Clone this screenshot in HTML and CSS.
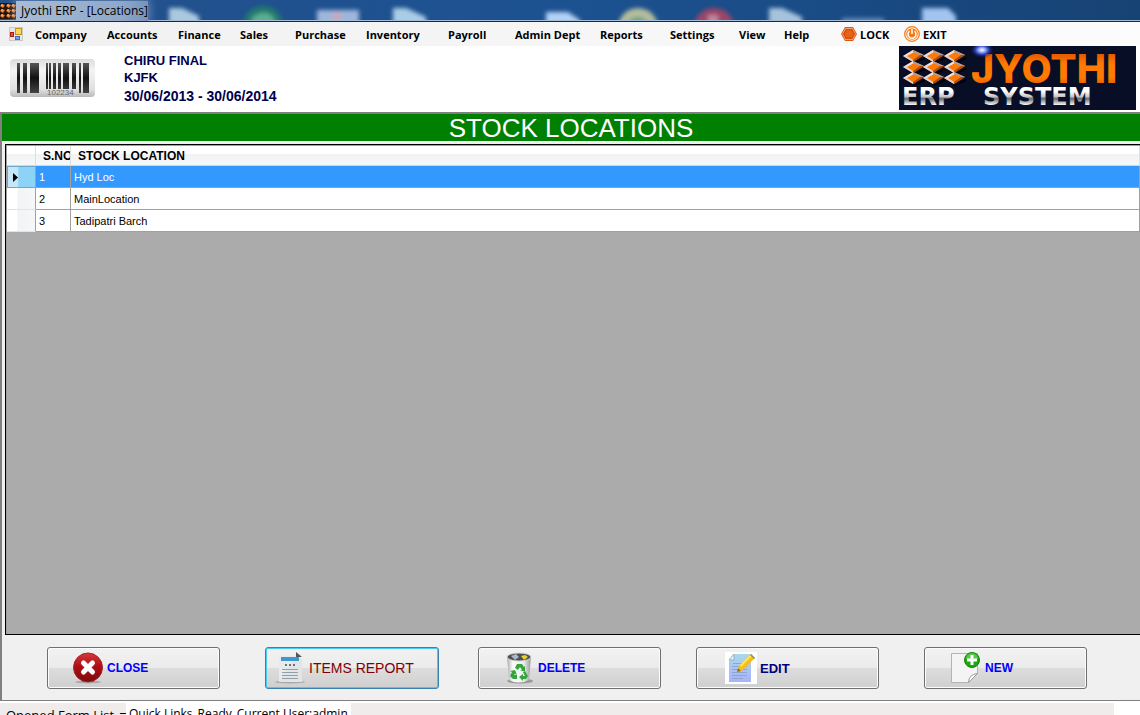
FILE: index.html
```html
<!DOCTYPE html>
<html lang="en">
<head>
  <meta charset="UTF-8" />
  <meta name="viewport" content="width=device-width, initial-scale=1.0"/>
  <title>Jyothi ERP - [Locations]</title>
  <link rel="stylesheet" href="styles.css">
</head>
<body>
  <div class="titlebar">
    <svg class="desktop" width="1140" height="20" viewBox="0 0 1140 20" aria-hidden="true">
      <defs>
        <filter id="soft" x="-20%" y="-50%" width="140%" height="200%"><feGaussianBlur stdDeviation="2"/></filter>
      </defs>
      <g filter="url(#soft)">
        <path d="M169 8h13l17 8v10h-30z" fill="#a9c9de"/>
        <circle cx="263" cy="26" r="20" fill="#217a6c"/>
        <path d="M252 18q12-10 22 0v6h-22z" fill="#5fae92"/>
        <path d="M317 10h42v16h-42z" fill="#9fb6dc"/>
        <path d="M333 12h8v12h-8z" fill="#c9a8bd"/>
        <path d="M393 8h13l20 9v9h-33z" fill="#a9cde4"/>
        <path d="M546 12h22l12 8v6h-34z" fill="#b3d0f6"/>
        <circle cx="638" cy="28" r="20" fill="#b3bd9c"/>
        <circle cx="638" cy="29" r="12" fill="#6f9f86"/>
        <circle cx="714" cy="28" r="20" fill="#9c4468"/>
        <path d="M708 15h10v10h-10z" fill="#c5869c"/>
        <path d="M769 8h13l20 9v9h-33z" fill="#a5c4dc"/>
        <path d="M842 18h42v6h-42z" fill="#5f8abb"/>
        <path d="M922 8h26l8 8v10h-34z" fill="#a3c4ee"/>
        <path d="M20 16h28v8H20z" fill="#b7cbb9"/>
        <path d="M85 18h42v6H85z" fill="#9b9cb8"/>
      </g>
    </svg>
    <svg class="app-icon" width="16" height="16" viewBox="0 0 16 16" aria-hidden="true">
      <rect width="16" height="16" fill="#23140e"/>
      <g fill="#f57e20">
        <path d="M0 3l2-2 3 1-2 3zM6 3l2-2 3 1-2 3zM11 3l2-2 3 1-2 3zM0 8l2-2 3 1-2 3zM6 8l2-2 3 1-2 3zM11 8l2-2 3 1-2 3zM0 13l2-2 3 1-2 3zM6 13l2-2 3 1-2 3zM11 13l2-2 3 1-2 3z"/>
      </g>
      <path d="M1 2h2M7 2h2M12 2h2M1 7h2M7 7h2M12 7h2M1 12h2M7 12h2M12 12h2" stroke="#ffd0a8"/>
    </svg>
    <span class="window-title">Jyothi ERP - [Locations]</span>
  </div>

  <nav class="menu">
    <svg width="14" height="14" viewBox="0 0 14 14" aria-hidden="true">
      <rect x="0.5" y="0.5" width="13" height="13" fill="#e6e6e6" stroke="#c9c9c9"/>
      <rect x="6.5" y="1.5" width="6" height="6" fill="#ffd45a" stroke="#c99312"/>
      <rect x="1.5" y="5.5" width="3" height="4" fill="#e2503a" stroke="#a91d14"/>
      <rect x="6.5" y="9.5" width="4" height="3" fill="#6fa5f0" stroke="#3b6fd0"/>
    </svg>
    <a href="#">Company</a>
    <a href="#">Accounts</a>
    <a href="#">Finance</a>
    <a href="#">Sales</a>
    <a href="#">Purchase</a>
    <a href="#">Inventory</a>
    <a href="#">Payroll</a>
    <a href="#">Admin Dept</a>
    <a href="#">Reports</a>
    <a href="#">Settings</a>
    <a href="#">View</a>
    <a href="#">Help</a>
    <a href="#">
      <svg width="16" height="16" viewBox="0 0 16 16" aria-hidden="true">
        <path d="M4 1h8l4 7-4 7H4L0 8z" fill="#e0560f"/>
        <path d="M4.500 2.500h7L14.500 8l-3 5.500h-7L1.500 8z" fill="none" stroke="#f6a46a"/>
        <path d="M5 4h6l2 4-2 4H5L3 8z" fill="#e8621a" stroke="#c94e0c"/>
      </svg>
      LOCK
    </a>
    <a href="#">
      <svg width="16" height="16" viewBox="0 0 16 16" aria-hidden="true">
        <circle cx="8" cy="8" r="7.300" fill="#fff" stroke="#f57a14" stroke-width="1.300"/>
        <circle cx="8" cy="8" r="5.800" fill="#f57a14"/>
        <path d="M5.500 5.200a4 4 0 1 0 5 0M8 3v5" fill="none" stroke="#fff" stroke-width="1.500"/>
      </svg>
      EXIT
    </a>
  </nav>

  <header>
    <svg class="barcode" width="88" height="42" viewBox="0 0 88 42" role="img" aria-label="Barcode">
      <defs>
        <linearGradient id="plate" x1="0" y1="0" x2="0" y2="1">
          <stop offset="0" stop-color="#dcdcdc"/>
          <stop offset="0.300" stop-color="#f4f4f4"/>
          <stop offset="0.800" stop-color="#e0e0e0"/>
          <stop offset="1" stop-color="#b9b9b9"/>
        </linearGradient>
        <linearGradient id="bars" x1="0" y1="0" x2="0" y2="1">
          <stop offset="0" stop-color="#555"/>
          <stop offset="0.500" stop-color="#111"/>
          <stop offset="1" stop-color="#444"/>
        </linearGradient>
      </defs>
      <rect x="1" y="2" width="85" height="38" rx="4" fill="url(#plate)"/>
      <path fill="url(#bars)" d="M8 6h3v30H8zM14 6h4v30h-4zM21 6h9v30h-9zM37 6h2v26h-2zM40 6h2v26h-2zM44 6h3v26h-3zM49 6h3v26h-3zM54 6h6v26h-6zM63 6h4v26h-4zM70 6h2v30h-2zM74 6h6v30h-6z"/>
      <text class="barcode-number" x="38" y="38">102234</text>
    </svg>
    <div class="company">
      <div>CHIRU FINAL</div>
      <div>KJFK</div>
      <div class="period">30/06/2013 - 30/06/2014</div>
    </div>
    <svg class="logo" width="237" height="64" viewBox="0 0 237 64" role="img" aria-label="Jyothi ERP System">
      <defs>
        <radialGradient id="flare">
          <stop offset="0" stop-color="#fff"/>
          <stop offset="0.300" stop-color="#8fa6ff"/>
          <stop offset="0.600" stop-color="#2b43c8" stop-opacity="0.800"/>
          <stop offset="1" stop-color="#0a0f2a" stop-opacity="0"/>
        </radialGradient>
        <linearGradient id="chrome" x1="0" y1="0" x2="0" y2="1">
          <stop offset="0.300" stop-color="#fff"/>
          <stop offset="0.480" stop-color="#c8c8c8"/>
          <stop offset="0.560" stop-color="#6b6b70"/>
          <stop offset="0.780" stop-color="#f4f4f4"/>
        </linearGradient>
        <linearGradient id="amber" x1="0" y1="0" x2="0" y2="1">
          <stop offset="0.200" stop-color="#e65a00"/>
          <stop offset="0.400" stop-color="#ff7a00"/>
          <stop offset="0.700" stop-color="#ff7a00"/>
          <stop offset="0.850" stop-color="#e65a00"/>
        </linearGradient>
        <g id="gem">
          <path d="M2 8l9 5 11-6v2l-11 5z" fill="#000"/>
          <path d="M0 6L10 0l11 5-11 7z" fill="#ff7a05"/>
          <path d="M0 6L10 0l1 2-7 4z" fill="#e6e2ea"/>
          <path d="M10 0l11 5h-4l-7-3z" fill="#a7a0a8"/>
          <path d="M0 6l10 6v-2L4 6z" fill="#d9d3dc"/>
          <path d="M10 12l11-7h-4l-7 5z" fill="#b34a00"/>
        </g>
      </defs>
      <rect width="237" height="64" fill="#090e27"/>
      <use href="#gem" x="4" y="4"/><use href="#gem" x="24" y="4"/><use href="#gem" x="45" y="4"/>
      <use href="#gem" x="4" y="15"/><use href="#gem" x="24" y="15"/><use href="#gem" x="45" y="15"/>
      <use href="#gem" x="4" y="26"/><use href="#gem" x="24" y="26"/><use href="#gem" x="45" y="26"/>
      <text class="logo-name" x="72" y="37">JYOTHI</text>
      <ellipse cx="83" cy="4" rx="12" ry="8" fill="url(#flare)"/>
      <text class="logo-sub" x="3" y="59">ERP</text>
      <text class="logo-sub" x="84" y="59">SYSTEM</text>
    </svg>
  </header>

  <main>
    <h1>STOCK LOCATIONS</h1>
    <div class="grid">
      <table>
        <thead>
          <tr>
            <th class="mark"></th>
            <th class="sno">S.NO</th>
            <th>STOCK LOCATION</th>
          </tr>
        </thead>
        <tbody>
          <tr class="selected">
            <td class="mark"><svg width="5" height="9" viewBox="0 0 5 9" aria-hidden="true"><path d="M0 0l5 4.500L0 9z"/></svg></td>
            <td>1</td>
            <td>Hyd Loc</td>
          </tr>
          <tr>
            <td class="mark"></td>
            <td>2</td>
            <td>MainLocation</td>
          </tr>
          <tr>
            <td class="mark"></td>
            <td>3</td>
            <td>Tadipatri Barch</td>
          </tr>
        </tbody>
      </table>
    </div>

    <div class="actions">
      <button type="button" class="close">
        <svg width="32" height="32" viewBox="0 0 32 32" aria-hidden="true">
          <defs>
            <linearGradient id="red" x1="0" y1="0" x2="0" y2="1">
              <stop offset="0" stop-color="#d8383c"/>
              <stop offset="0.450" stop-color="#ad1015"/>
              <stop offset="1" stop-color="#7d0a0d"/>
            </linearGradient>
          </defs>
          <ellipse cx="16" cy="30" rx="13" ry="1.500" fill="#aaa"/>
          <circle cx="16" cy="15.500" r="14.500" fill="url(#red)" stroke="#a3262a"/>
          <path d="M11.500 11l9 9M20.500 11l-9 9" stroke="#fff" stroke-width="5" stroke-linecap="round"/>
        </svg>
        CLOSE
      </button>
      <button type="button" class="items">
        <svg width="32" height="32" viewBox="0 0 32 32" aria-hidden="true">
          <ellipse cx="16" cy="30" rx="15" ry="1.500" fill="#aaa"/>
          <path d="M5 4h19v26H5z" fill="#e9eaeb"/>
          <path d="M22 4l6 3v23H5z" fill="#e3e4e5"/>
          <path d="M7 5h18v4H7z" fill="#3d98cc"/>
          <path d="M22 0l6 5h-6z" fill="#555"/>
          <path d="M11 12h2v2h-2zM15 12h2v2h-2zM19 12h2v2h-2z" fill="#68737c"/>
          <path d="M8 17.500h16M8 20.500h16M8 23.500h16M8 26.500h16" stroke="#8fa0aa"/>
        </svg>
        ITEMS REPORT
      </button>
      <button type="button" class="delete">
        <svg width="32" height="32" viewBox="0 0 32 32" aria-hidden="true">
          <defs>
            <linearGradient id="bin" x1="0" y1="0" x2="1" y2="0">
              <stop offset="0" stop-color="#aaa"/>
              <stop offset="0.250" stop-color="#fff"/>
              <stop offset="0.700" stop-color="#ececec"/>
              <stop offset="1" stop-color="#999"/>
            </linearGradient>
          </defs>
          <ellipse cx="17" cy="29" rx="13" ry="2.500" fill="#999"/>
          <path d="M4 5l2 23q10 5 20 0l2-23z" fill="url(#bin)"/>
          <ellipse cx="16" cy="5" rx="12" ry="4" fill="#4d4f50" stroke="#d5d5d5"/>
          <path d="M8 4l5-2 3 3-4 3z" fill="#a7bac5"/>
          <path d="M18 4l4-1 3 2-4 3z" fill="#e7d32c"/>
          <g fill="#32a63b">
            <path d="M12 16l2-4h5l2 3 1-1v5h-5l2-1-2-3-2 3z"/>
            <path d="M22 19l3 5-2 3h-3v2l-4-4 4-3v2h2l-2-4z"/>
            <path d="M14 23v4h-4l-3-3 2-4-2-1 5-1 2 5-2-1-1 1z"/>
          </g>
        </svg>
        DELETE
      </button>
      <button type="button" class="edit">
        <svg width="32" height="32" viewBox="0 0 32 32" aria-hidden="true">
          <defs>
            <linearGradient id="sheet" x1="0" y1="0" x2="0" y2="1">
              <stop offset="0" stop-color="#a9d8ec"/>
              <stop offset="1" stop-color="#a9b2ff"/>
            </linearGradient>
          </defs>
          <rect width="32" height="32" fill="#fff"/>
          <path d="M9 2h17v28H4V8z" fill="url(#sheet)"/>
          <path d="M9 2v6H4z" fill="#e7f4f8" stroke="#8fb4c4"/>
          <path d="M8 11.500h12M7 14.500h15M7 17.500h15M7 20.500h15M7 23.500h15M7 26.500h11" stroke="#8ea6c8"/>
          <path d="M12 20l2-6L26 2l4 4-12 12z" fill="#f8be14"/>
          <path d="M15 13L26 2l2 1-12 12z" fill="#ffe35a"/>
          <path d="M25 3l1-1 4 4-1 1z" fill="#8f8a70"/>
          <path d="M12 20l1-4 3 3z" fill="#9c6b12"/>
        </svg>
        EDIT
      </button>
      <button type="button" class="new">
        <svg width="32" height="32" viewBox="0 0 32 32" aria-hidden="true">
          <path d="M1.500 1.500h26v20l-9 9h-17z" fill="#f4f4f4" stroke="#b3b3b3"/>
          <path d="M18.500 30.500q0-8 9-9z" fill="#fff" stroke="#999"/>
          <circle cx="22" cy="8" r="7.500" fill="#18a80c" stroke="#0f8a0a"/>
          <path d="M16 7a6 6 0 0 1 12 0z" fill="#54c84a"/>
          <path d="M22 3v10M17 8h10" stroke="#fff" stroke-width="3"/>
        </svg>
        NEW
      </button>
    </div>
  </main>

  <footer>
    <div class="forms"><span>Opened Form List</span><span>=</span></div>
    <div class="status"><span>Quick Links</span><span>Ready</span><span>Current User:admin</span></div>
    <div class="grip"></div>
  </footer>
</body>
</html>
```
FILE: styles.css
```css
* {
  box-sizing: border-box;
}

body {
  margin: 0;
  height: 100vh;
  overflow: hidden;
  display: flex;
  flex-direction: column;
  font-family: 'Liberation Sans', Arial, sans-serif;
  font-size: 12px;
  color: #000;
  background: #fff;
}

/* window title */
.titlebar {
  position: relative;
  flex: none;
  height: 22px;
  display: flex;
  align-items: center;
  overflow: hidden;
  background: linear-gradient(to right, #24508c, #1c5291 50%, #174274);
  border-bottom: 1px solid #16294d;
  box-shadow: inset 0 -1px #a3bcda;
}

.desktop {
  position: absolute;
  left: 0;
  top: 0;
}

.app-icon {
  position: relative;
}

.window-title {
  position: relative;
  padding: 0 0 0 5px;
  font-family: 'Open Sans', sans-serif;
  line-height: 20px;
  background: linear-gradient(to right, #a9bcd4, #8fa8c8 80%, #7593bb);
  box-shadow: 0 0 8px 2px rgba(143, 168, 200, 0.6);
}

/* menu */
.menu {
  flex: none;
  height: 24px;
  display: grid;
  grid-template-columns: 26px 72px 71px 62px 55px 71px 82px 67px 85px 70px 69px 45px 57px 63px 60px;
  align-items: center;
  padding-left: 9px;
  background: linear-gradient(to right, #f0f0f0, #fcfcfc);
}

.menu a {
  display: flex;
  align-items: center;
  gap: 3px;
  font-family: 'Open Sans', sans-serif;
  font-size: 11px;
  font-weight: bold;
  color: #000;
  text-decoration: none;
  white-space: nowrap;
}

/* company header */
header {
  flex: none;
  height: 66px;
  display: flex;
  align-items: flex-start;
  padding: 0 4px 0 9px;
}

.barcode {
  margin-top: 11px;
}

.barcode-number {
  font-size: 8px;
  fill: #666;
}

.company {
  flex: 1;
  padding: 6px 0 0 27px;
  font-size: 13px;
  font-weight: bold;
  line-height: 17px;
  color: #00004d;
}

.period {
  padding-top: 2px;
  font-size: 14px;
}

.logo-name {
  font: 800 39px Inter, sans-serif;
  fill: url(#amber);
}

.logo-sub {
  font: bold 24px 'DejaVu Sans', sans-serif;
  fill: url(#chrome);
}

/* child window */
main {
  flex: 1;
  min-height: 0;
  display: flex;
  flex-direction: column;
  background: #f0f0f0;
  border-top: 2px solid #808080;
  border-left: 2px solid #808080;
  border-bottom: 1px solid #808080;
}

h1 {
  margin: 0;
  flex: none;
  font-size: 26px;
  font-weight: normal;
  line-height: 27px;
  height: 27px;
  padding-top: 1px;
  text-align: center;
  color: #fff;
  background: #008000;
}

.grid {
  flex: 1;
  margin: 3px 0 0 3px;
  border: 1px solid #000;
  border-right: none;
  box-shadow: inset 1px 1px #a0a0a0;
  padding: 1px 0 0 1px;
  background: #ababab;
}

table {
  width: 100%;
  table-layout: fixed;
  border-collapse: separate;
  border-spacing: 0;
  background: #fff;
}

th {
  height: 20px;
  padding: 0 0 0 7px;
  text-align: left;
  font-size: 12px;
  overflow: hidden;
  white-space: nowrap;
  background: linear-gradient(#fff 40%, #f1f2f4 45%, #f7f8fa);
  border-right: 1px solid #dedfe1;
  border-bottom: 1px solid #d5d5d5;
}

td {
  height: 22px;
  padding: 0 0 0 3px;
  font-size: 11px;
  border-right: 1px solid #a0a0a0;
  border-bottom: 1px solid #a0a0a0;
}

.mark {
  width: 29px;
  padding-left: 6px;
}

.sno {
  width: 35px;
}

td.mark {
  border-bottom-color: #e3e3e3;
  background: linear-gradient(to right, #fff 35%, #f1f3f5 40%, #f6f7f9);
}

.selected td {
  color: #fff;
  background: #3399ff;
}

.selected td.mark {
  color: #000;
  background: linear-gradient(to right, #c3e6f8 35%, #8dd3f5 40%, #8dd3f5);
  border: 1px solid #6ba9cc;
  border-right-color: #a0a0a0;
  padding-left: 5px;
}

.mark svg {
  display: block;
}

/* buttons */
.actions {
  flex: none;
  display: grid;
  grid-template-columns: 218fr 213fr 218fr 228fr 216fr;
  padding: 12px 0 11px 45px;
}

button {
  display: flex;
  align-items: center;
  gap: 3px;
  height: 42px;
  padding: 0 0 0 24px;
  font-family: inherit;
  font-size: 12px;
  font-weight: bold;
  color: #0000ff;
  background: linear-gradient(#f2f2f2, #ebebeb 49%, #dddddd 50%, #cfcfcf);
  border: 1px solid #707070;
  border-radius: 3px;
  box-shadow: inset 0 0 0 1px #fbfbfb;
}

.close {
  width: 173px;
}

.items {
  width: 174px;
  padding-left: 8px;
  font-size: 14px;
  font-weight: normal;
  color: #800000;
  border-color: #3c7fb1;
  box-shadow: inset 0 0 0 1px #48cbf5;
}

.delete {
  width: 183px;
}

.edit {
  width: 183px;
  padding-left: 28px;
  font-size: 13px;
  color: #000080;
}

.new {
  width: 163px;
  padding-left: 25px;
}

/* status bar */
footer {
  flex: none;
  height: 14px;
  display: flex;
  overflow: hidden;
  border-top: 2px solid #fff;
  font-family: 'Open Sans', sans-serif;
  line-height: 16px;
  white-space: nowrap;
  background: #f0eceb;
}

.forms {
  width: 126px;
  display: flex;
  gap: 5px;
  padding: 4px 0 0 6px;
  font-size: 13px;
}

.status {
  display: flex;
  gap: 5px;
  padding: 3px 3px 0;
  background: #fff;
}

.grip {
  width: 26px;
  margin-left: auto;
  background: #fff;
}
```
